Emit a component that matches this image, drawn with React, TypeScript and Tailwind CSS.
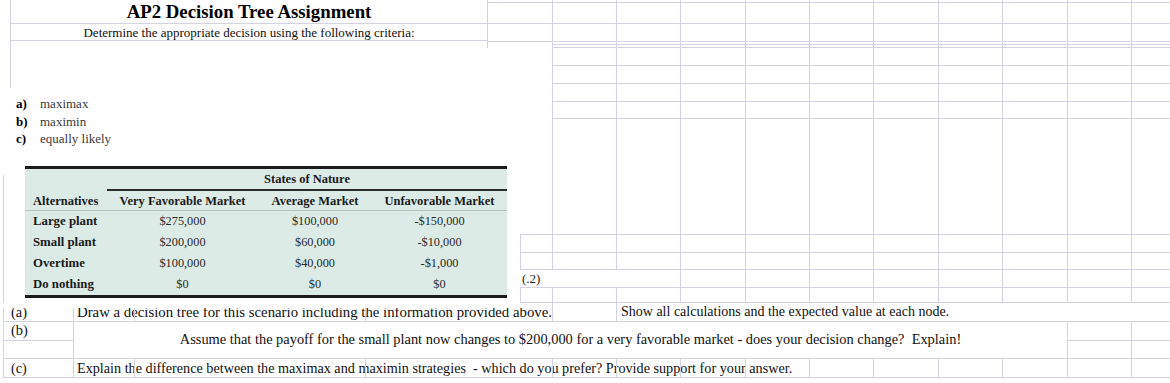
const line = 'border-[#d3d3e1]'

const rightCols = [64, 64, 65, 64, 64, 65, 64, 65, 64, 39]

function GridRow({ h, cols, bottom = true }: { h: number; cols: number[]; bottom?: boolean }) {
  return (
    <div className={`flex ${bottom ? 'border-b' : ''} ${line}`} style={{ height: h }}>
      {cols.map((w, i) => (
        <div key={i} className={`shrink-0 border-l ${line}`} style={{ width: w }} />
      ))}
    </div>
  )
}

const rows = [
  { name: 'Large plant', v: ['$275,000', '$100,000', '-$150,000'] },
  { name: 'Small plant', v: ['$200,000', '$60,000', '-$10,000'] },
  { name: 'Overtime', v: ['$100,000', '$40,000', '-$1,000'] },
  { name: 'Do nothing', v: ['$0', '$0', '$0'] },
]

function PayoffTable() {
  return (
    <div className="w-[482px] bg-[#dcebe6] border-t-[3px] border-b-[3px] border-[#1d1d1d] text-[12.3px] text-[#1a1a1a]">
      <div className="flex h-[22px]">
        <div className="w-[82px]" />
        <div className="flex-1 border-b-2 border-[#2b2b2b] text-center font-bold text-[12.5px] leading-[20px]">States of Nature</div>
      </div>
      <div className="grid grid-cols-[82px_151px_114px_135px] h-[20px] leading-[20px] font-bold text-[12.5px] border-b border-[#b4c3be]">
        <div className="pl-[8px]">Alternatives</div>
        <div className="text-center">Very Favorable Market</div>
        <div className="text-center">Average Market</div>
        <div className="text-center">Unfavorable Market</div>
      </div>
      {rows.map((r) => (
        <div key={r.name} className="grid grid-cols-[82px_151px_114px_135px] h-[21px] leading-[21px]">
          <div className="pl-[8px] font-bold text-[12.8px]">{r.name}</div>
          {r.v.map((v, i) => (
            <div key={i} className="text-center text-[#2a2a2a]">{v}</div>
          ))}
        </div>
      ))}
    </div>
  )
}

export default function App() {
  return (
    <div className="w-[1170px] h-[383px] overflow-hidden bg-white font-['Liberation_Serif',serif] text-black">
      {/* header band */}
      <div className="flex h-[48px]">
        <div className="w-[10px] shrink-0" />
        <div className={`w-[477px] shrink-0 border-l ${line}`}>
          <div className={`h-[24px] border-b ${line} text-center text-[18.8px] font-bold leading-[24px]`}>
            AP2 Decision Tree Assignment
          </div>
          <div className={`h-[17px] border-b ${line} text-center text-[13px] leading-[17px] text-[#111]`}>
            Determine the appropriate decision using the following criteria:
          </div>
        </div>
        <div className={`w-[65px] shrink-0 border-l ${line}`}>
          <div className={`h-[3px] border-b ${line}`} />
          <div className={`h-[21px] border-b ${line}`} />
          <div className={`h-[18px] border-b ${line}`} />
        </div>
        <div className="w-[618px] shrink-0">
          <GridRow h={3} cols={rightCols} />
          <GridRow h={21} cols={rightCols} />
          <GridRow h={18} cols={rightCols} />
          <GridRow h={3} cols={rightCols} />
          <GridRow h={3} cols={rightCols} />
        </div>
      </div>

      {/* middle band */}
      <div className="flex h-[255px]">
        <div className="w-[520px] shrink-0">
          <div className={`ml-[10px] h-[40px] border-l ${line}`} />
          <div className="h-[75px] pl-[16px] pt-[7px] text-[13px] leading-[17.5px] text-[#3a3a3a]">
            {[
              ['a)', 'maximax'],
              ['b)', 'maximin'],
              ['c)', 'equally likely'],
            ].map(([k, t]) => (
              <div key={k} className="flex">
                <span className="w-[24px] font-bold text-black">{k}</span>
                <span>{t}</span>
              </div>
            ))}
          </div>
          <div className="flex h-[140px]">
            <div className="w-[3px] shrink-0" />
            <div className={`w-[22px] shrink-0 mt-[12px] border-l ${line}`} />
            <div className="mt-[3px]">
              <PayoffTable />
            </div>
          </div>
        </div>
        <div className="w-[650px] shrink-0">
          <div className="flex h-[186px]">
            <div className="w-[32px] shrink-0" />
            <div className="w-[618px] shrink-0">
              <GridRow h={18} cols={rightCols} />
              <GridRow h={18} cols={rightCols} />
              <GridRow h={18} cols={rightCols} />
              <GridRow h={17} cols={rightCols} />
              <GridRow h={115} cols={rightCols} bottom={false} />
            </div>
          </div>
          <div className={`border-t ${line}`}>
            <GridRow h={18} cols={[32, ...rightCols]} />
            <GridRow h={17} cols={[32, ...rightCols]} />
            <div className={`flex h-[18px] border-b ${line}`}>
              <div className="w-[160px] shrink-0 pl-[2px] text-[13px] leading-[17px] text-[#222]">(.2)</div>
              {rightCols.slice(2).map((w, i) => (
                <div key={i} className={`shrink-0 border-l ${line}`} style={{ width: w }} />
              ))}
            </div>
            <GridRow h={15} cols={[32, ...rightCols]} />
          </div>
        </div>
      </div>

      {/* question rows */}
      <div className="text-[14.4px] text-[#111]">
        <div className={`ml-[3px] flex h-[19px] border-b ${line}`}>
          <div className="w-[549px] shrink-0 h-[18px]">
            <div className="mt-[5px] h-[13px] overflow-hidden flex items-end">
              <div className={`w-[70px] h-[18px] shrink-0 border-l ${line} pl-[7px] leading-[18px]`}>(a)</div>
              <div className={`w-[61px] h-[18px] shrink-0 border-l ${line} pl-[3px] leading-[18px] whitespace-nowrap text-[14.8px]`}>
                Draw a decision tree for this scenario including the information provided above.
              </div>
              <div className={`w-[231px] h-[18px] shrink-0 border-l ${line}`} />
              <div className={`w-[187px] h-[18px] shrink-0 border-l ${line}`} />
            </div>
          </div>
          <div className={`w-[64px] shrink-0 border-l ${line}`} />
          <div className={`w-[554px] shrink-0 border-l ${line} pl-[4px] text-[14px] leading-[18px]`}>
            Show all calculations and the expected value at each node.
          </div>
        </div>

        <div className={`ml-[3px] flex h-[37px] border-b ${line}`}>
          <div className={`w-[70px] shrink-0 border-l ${line}`}>
            <div className={`h-[19px] border-b ${line} pl-[7px] leading-[16px]`}>(b)</div>
          </div>
          <div className={`w-[994px] shrink-0 border-l ${line} flex items-center justify-center whitespace-nowrap`}>
            Assume that the payoff for the small plant now changes to $200,000 for a very favorable market - does your decision change?&nbsp; Explain!
          </div>
          {[64, 39].map((w) => (
            <div key={w} className={`shrink-0 border-l ${line}`} style={{ width: w }}>
              <div className={`h-[19px] border-b ${line}`} />
            </div>
          ))}
        </div>

        <div className={`ml-[3px] flex h-[19px] border-b ${line} leading-[18px] text-[14.2px]`}>
          <div className={`w-[70px] shrink-0 border-l ${line} pl-[7px]`}>(c)</div>
          <div className={`w-[61px] shrink-0 border-l ${line} pl-[3px] whitespace-nowrap`}>
            Explain the difference between the maximax and maximin strategies&nbsp; - which do you prefer? Provide support for your answer.
          </div>
          {[231, 187, ...rightCols].map((w, i) => (
            <div key={i} className={`shrink-0 border-l ${line}`} style={{ width: w }} />
          ))}
        </div>
      </div>
    </div>
  )
}
